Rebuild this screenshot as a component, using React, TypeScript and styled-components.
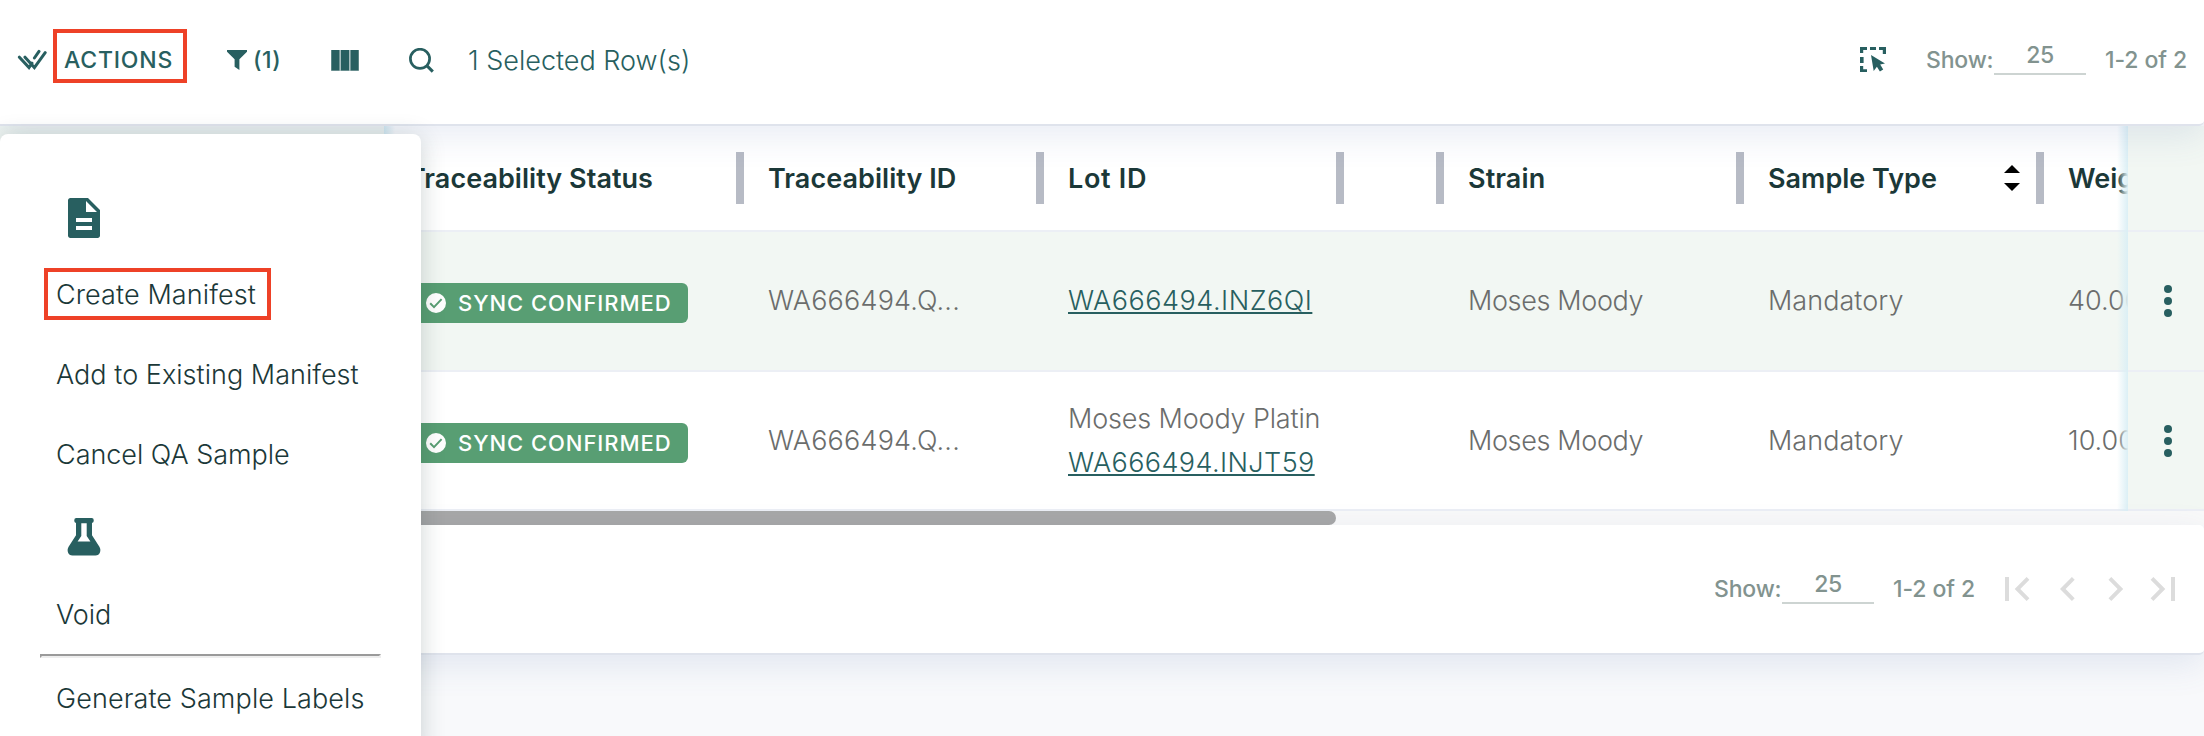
import React from "react";
import styled, { createGlobalStyle, css } from "styled-components";

const teal = "#285f60";
const ink = "#1b3838";
const muted = "#82938f";
const mint = "#f2f7f3";

const GlobalStyle = createGlobalStyle`
  * { box-sizing: border-box; }
  body {
    margin: 0;
    background: #f8f9fb;
    font-family: Inter, "Liberation Sans", sans-serif;
    overflow: hidden;
  }
`;

const Page = styled.div`
  position: relative;
  width: 2204px;
  height: 736px;
  overflow: hidden;
`;

const Label = styled.span<{ $size?: number; $weight?: number; $track?: number; $color?: string }>`
  font-size: ${(p) => p.$size ?? 27}px;
  font-weight: ${(p) => p.$weight ?? 300};
  letter-spacing: ${(p) => p.$track ?? 0}px;
  color: ${(p) => p.$color ?? "inherit"};
  white-space: nowrap;
`;

/* ---------- bars ---------- */

const cardShadow = css`
  box-shadow: 0 10px 34px rgba(70, 100, 165, 0.125);
`;

const Toolbar = styled.header`
  position: relative;
  z-index: 3;
  display: flex;
  align-items: center;
  height: 126px;
  padding: 0 17px 4px 17px;
  background: #fff;
  border-bottom: 2px solid #dfe3ec;
  border-radius: 0 0 5px 0;
  color: ${teal};
  ${cardShadow}
`;

const ActionsButton = styled.div`
  position: relative;
  display: flex;
  align-items: center;
  margin-left: 17px;
  width: 110px;
  height: 54px;
`;

const FilterButton = styled.div`
  display: flex;
  align-items: center;
  gap: 6px;
  margin-left: 53px;
  width: 104px;
`;

const SearchButton = styled.div`
  display: flex;
  margin-left: 50px;
  margin-right: 34px;
`;

const Spacer = styled.div`
  flex: 1;
`;

const Highlight = styled.div<{ $box: string }>`
  position: absolute;
  inset: ${(p) => p.$box};
  border: 4px solid #ee4127;
`;

const Pager = styled.div<{ $left: number }>`
  display: flex;
  align-items: center;
  margin-left: ${(p) => p.$left}px;
  color: ${muted};
`;

const PageSize = styled.div`
  width: 92px;
  height: 39px;
  margin: 0 19px 9px 0;
  border-bottom: 2px solid #cdd4d2;
  line-height: 38px;
  text-align: center;
`;

const ShowLabel = styled.div`
  width: 68px;
`;

const Footer = styled.footer`
  position: relative;
  display: flex;
  align-items: center;
  justify-content: flex-end;
  height: 130px;
  padding-right: 7px;
  background: #fff;
  border-bottom: 2px solid #dfe3ec;
  border-radius: 0 5px 5px 0;
  ${cardShadow}
`;

const PageButtons = styled.div`
  display: flex;
  margin-left: 30px;
`;

/* ---------- table ---------- */

const Row = styled.div<{ $height: number; $selected?: boolean }>`
  display: grid;
  grid-template-columns: 384px 360px 300px 300px 100px 300px 300px 84px 76px;
  height: ${(p) => p.$height}px;
  background: ${(p) => (p.$selected ? mint : "#fff")};
  border-bottom: 2px solid #eceff5;
  color: #6b6d6c;
`;

const Cell = styled.div<{ $stack?: boolean }>`
  display: flex;
  flex-direction: ${(p) => (p.$stack ? "column" : "row")};
  align-items: ${(p) => (p.$stack ? "flex-start" : "center")};
  justify-content: ${(p) => (p.$stack ? "center" : "flex-start")};
  min-width: 0;
  padding-left: 24px;
  overflow: hidden;
  line-height: 44px;
`;

const HeadCell = styled(Cell)`
  color: ${ink};

  ${Label} {
    padding-top: 2px;
  }
`;

const ResizeBar = styled.div`
  width: 8px;
  height: 52px;
  margin-left: auto;
  background: #b7bbc5;
`;

const SortIcon = styled.svg`
  margin: 0 16px 0 auto;

  & + ${ResizeBar} {
    margin-left: 0;
  }
`;

const Pinned = styled.div<{ $side: "left" | "right" }>`
  position: relative;
  display: flex;
  align-items: center;
  justify-content: center;
  padding-left: 4px;
  background: ${mint};

  &::before {
    content: "";
    position: absolute;
    top: 0;
    bottom: -2px;
    width: 11px;
    ${(p) =>
      p.$side === "left"
        ? css`
            left: 100%;
            background: linear-gradient(to right, #d8eef5, rgba(216, 238, 245, 0));
          `
        : css`
            right: 100%;
            background: linear-gradient(to left, #dbeff5, rgba(219, 239, 245, 0));
          `}
  }
`;

const LotLink = styled.a<{ $track: number }>`
  font-size: 27px;
  font-weight: 300;
  letter-spacing: ${(p) => p.$track}px;
  color: ${teal};
  text-decoration: underline;
  text-decoration-thickness: 2px;
  text-underline-offset: 2px;
  text-decoration-skip-ink: none;
  white-space: nowrap;
`;

const Badge = styled.div`
  display: flex;
  align-items: center;
  gap: 12px;
  width: 280px;
  height: 40px;
  margin-top: 4px;
  padding-left: 18px;
  border-radius: 6px;
  background: #589e73;
  color: #fff;
`;

const ScrollTrack = styled.div`
  height: 14px;
  background: #f9f9f9;
`;

const ScrollThumb = styled.div`
  width: 1336px;
  height: 14px;
  border-radius: 7px;
  background: #a7a7a7;
`;

/* ---------- menu ---------- */

const Menu = styled.nav`
  position: absolute;
  z-index: 5;
  top: 134px;
  left: 0;
  width: 421px;
  height: 620px;
  padding-top: 40px;
  background: #fff;
  border-radius: 8px;
  box-shadow: 0 4px 24px rgba(30, 60, 60, 0.22);
  color: ${ink};
`;

const MenuItem = styled.div`
  position: relative;
  display: flex;
  align-items: center;
  height: 80px;
  padding: 1px 0 0 56px;
`;

const MenuIcon = styled.div<{ $shift: number }>`
  display: flex;
  align-items: center;
  height: 80px;
  padding: ${(p) => p.$shift}px 0 0 60px;
`;

const Divider = styled.hr`
  width: 341px;
  height: 4px;
  margin: 0 40px;
  border: 2px solid;
  border-color: #9a9a9a #eeeeee #eeeeee #9a9a9a;
`;

/* ---------- icons ---------- */

const BatchIcon = () => (
  <svg width="30" height="22" viewBox="0 0 30 22" fill="none" stroke={teal} strokeWidth="3" strokeLinecap="round">
    <path d="M2.4 8.2 12 18.6l3-4.4M8 8.2l9.4 10.4L28.2 3.6M17.4 9l4.6-6.6" />
  </svg>
);

const FunnelIcon = () => (
  <svg width="20" height="20" viewBox="0 0 20 20" fill={teal}>
    <path d="M0 0h20v1.8l-7.6 7.4V20l-4.8-3.2V9.2L0 1.8z" />
  </svg>
);

const ColumnsIcon = () => (
  <svg width="28" height="21" viewBox="0 0 28 21" fill={teal}>
    <path fill="#a9bfbf" d="M0 0h28v21H0z" />
    <path d="M.4 0h8v20.4h-8zM10 0h8v20.4h-8zM19.6 0h8v20.4h-8z" />
  </svg>
);

const SearchIcon = () => (
  <svg width="25" height="25" viewBox="0 0 25 25" fill="none" stroke={teal} strokeWidth="2.7">
    <circle cx="11" cy="10.8" r="9.6" />
    <path d="m17.8 17.6 6 6" strokeWidth="3" />
  </svg>
);

const SelectAreaIcon = () => (
  <svg width="26" height="26" viewBox="0 0 26 26" fill={teal}>
    <path d="M0 0h7v3H3.200v3H0zM10 0h6v3h-6zM19 0h7v7h-3.200V3H19zM0 10h3.600v6H0zM0 19h3.200v3.200H7V25H0z" />
    <path d="m11 8 14 8.6-4.8 1 3 5-3.3 1.9-3-4.8L13.7 24z" />
  </svg>
);

const DocumentIcon = () => (
  <svg width="48" height="48" viewBox="0 0 24 24" fill={teal}>
    <path d="M14 2H5.2C4.500 2 4 2.500 4 3.200v17.600c0 .7.5 1.200 1.200 1.200h13.600c.7 0 1.200-.5 1.200-1.200V8l-6-6zm2 16H8v-2h8v2zm0-4H8v-2h8v2zm-3-5V3.500L18.500 9H13z" />
  </svg>
);

const FlaskIcon = () => (
  <svg width="48" height="40" viewBox="0 0 48 40" fill={teal}>
    <path
      fillRule="evenodd"
      d="M16.300 1h15.400a2 2 0 0 1 2 2v1a2 2 0 0 1-1.700 2v12.200l7.400 11.500c2.200 3.500.6 8.800-3.900 8.800h-23c-4.500 0-6.100-5.300-3.900-8.800L16 18.200V6a2 2 0 0 1-1.700-2V3a2 2 0 0 1 2-2zM21.300 6.200v12.700l-3.700 5.700h12.800l-3.700-5.700V6.200z"
    />
  </svg>
);

const CheckIcon = () => (
  <svg width="20" height="20" viewBox="0 0 20 20">
    <circle cx="10" cy="10" r="10" fill="#fff" />
    <path d="m4.200 10.300 3.800 3.800 7.600-8" fill="none" stroke="#589e73" strokeWidth="2" />
  </svg>
);

const KebabIcon = () => (
  <svg width="8" height="32" viewBox="0 0 8 32" fill={teal}>
    <circle cx="4" cy="4" r="4" />
    <circle cx="4" cy="16" r="4" />
    <circle cx="4" cy="28" r="4" />
  </svg>
);

const pageIcons = [
  "M0 2h4v24H0zM21.600 2 24.400 4.800 15.300 14l9.100 9.200-2.800 2.800L9.700 14z",
  "M18.900 2 21.700 4.800 12.600 14l9.100 9.200-2.800 2.800L7 14z",
  "M10.300 2 7.500 4.800l9.100 9.200-9.100 9.200 2.800 2.800L22.200 14z",
  "M4.400 2 1.600 4.800l9.100 9.200-9.100 9.200L4.400 26 16.300 14zM22 2h4v24h-4z",
];

const PageIcon = styled.svg`
  width: 48px;
  height: 28px;
  fill: #dcdcdc;
`;

/* ---------- pieces ---------- */

const PagerInfo = ({ left }: { left: number }) => (
  <Pager $left={left}>
    <ShowLabel>
      <Label $size={23} $weight={500} $track={-0.2}>Show:</Label>
    </ShowLabel>
    <PageSize>
      <Label $size={23} $weight={500} $track={-0.3}>25</Label>
    </PageSize>
    <Label $size={23} $weight={500} $track={-0.1}>1-2 of 2</Label>
  </Pager>
);

const heads = [
  { text: "Traceability Status", track: 0.04 },
  { text: "Traceability ID", track: 0.05 },
  { text: "Lot ID", track: 0.7 },
  { text: "", track: 0 },
  { text: "Strain", track: 0.1 },
  { text: "Sample Type", track: 0, sort: true },
];

const rows = [
  { note: "", lot: "WA666494.INZ6QI", track: 0.52, weight: "40.00", height: 140, selected: true },
  { note: "Moses Moody Platin", lot: "WA666494.INJT59", track: 0.4, weight: "10.00", height: 139, selected: false },
];

export default function App() {
  return (
    <Page>
      <GlobalStyle />
      <Toolbar>
        <BatchIcon />
        <ActionsButton>
          <Label $size={23} $weight={500} $track={0.8}>ACTIONS</Label>
          <Highlight $box="-4px -13px 4px -11px" />
        </ActionsButton>
        <FilterButton>
          <FunnelIcon />
          <Label $size={23} $weight={500} $track={0.5}>(1)</Label>
        </FilterButton>
        <ColumnsIcon />
        <SearchButton>
          <SearchIcon />
        </SearchButton>
        <Label>1 Selected Row(s)</Label>
        <Spacer />
        <SelectAreaIcon />
        <PagerInfo left={40} />
      </Toolbar>

      <Row $height={106}>
        <Pinned $side="left" />
        {heads.map((h, i) => (
          <HeadCell key={i}>
            <Label $weight={600} $track={h.track}>{h.text}</Label>
            {h.sort && (
              <SortIcon width="16" height="26" viewBox="0 0 16 26">
                <path d="M0 8 8 0l8 8zM0 18h16l-8 8z" />
              </SortIcon>
            )}
            <ResizeBar />
          </HeadCell>
        ))}
        <HeadCell>
          <Label $weight={600}>Weight</Label>
        </HeadCell>
        <Pinned $side="right" />
      </Row>

      {rows.map((r) => (
        <Row key={r.lot} $height={r.height} $selected={r.selected}>
          <Pinned $side="left" />
          <Cell>
            <Badge>
              <CheckIcon />
              <Label $size={22} $weight={500} $track={0.95}>SYNC CONFIRMED</Label>
            </Badge>
          </Cell>
          <Cell>
            <Label $track={0.2}>WA666494.Q...</Label>
          </Cell>
          <Cell $stack>
            {r.note && <Label $track={-0.15}>{r.note}</Label>}
            <LotLink $track={r.track}>{r.lot}</LotLink>
          </Cell>
          <Cell />
          <Cell>
            <Label $track={-0.35}>Moses Moody</Label>
          </Cell>
          <Cell>
            <Label $track={0.05}>Mandatory</Label>
          </Cell>
          <Cell>
            <Label>{r.weight}</Label>
          </Cell>
          <Pinned $side="right">
            <KebabIcon />
          </Pinned>
        </Row>
      ))}

      <ScrollTrack>
        <ScrollThumb />
      </ScrollTrack>

      <Footer>
        <PagerInfo left={0} />
        <PageButtons>
          {pageIcons.map((d) => (
            <PageIcon key={d} viewBox="0 0 48 28">
              <path d={d} />
            </PageIcon>
          ))}
        </PageButtons>
      </Footer>

      <Menu>
        <MenuIcon $shift={8}>
          <DocumentIcon />
        </MenuIcon>
        <MenuItem>
          <Label $track={0.1}>Create Manifest</Label>
          <Highlight $box="14px 150px 14px 44px" />
        </MenuItem>
        <MenuItem>
          <Label $track={0.03}>Add to Existing Manifest</Label>
        </MenuItem>
        <MenuItem>
          <Label $track={-0.03}>Cancel QA Sample</Label>
        </MenuItem>
        <MenuIcon $shift={6}>
          <FlaskIcon />
        </MenuIcon>
        <MenuItem>
          <Label>Void</Label>
        </MenuItem>
        <Divider />
        <MenuItem>
          <Label $track={0.1}>Generate Sample Labels</Label>
        </MenuItem>
      </Menu>
    </Page>
  );
}
